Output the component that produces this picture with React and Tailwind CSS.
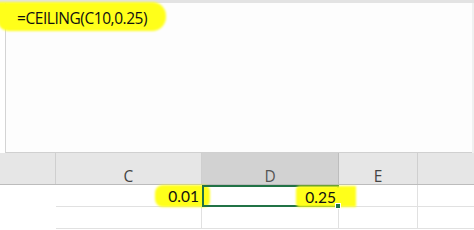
import React from "react";

const font = { fontFamily: '"Open Sans", Lato, "Liberation Sans", sans-serif' };

export default function App() {
  return (
    <div className="relative w-[474px] h-[230px] overflow-hidden bg-white" style={font}>
      {/* formula bar region */}
      <div className="h-[153px] border-t-[3px] border-[#e3e3e3] flex">
        <div className="w-[5px] bg-white" />
        <div className="flex-1 border-l border-[#d4d4d4] border-b border-b-[#d0d0d0] bg-[#fdfdfd] relative">
          <div className="absolute left-[-8px] top-[-1px] w-[168px] h-[29px] bg-[#ffff1a] rounded-r-[14px] rounded-bl-[10px] blur-[1px]" />
          <div className="relative pl-[11px] pt-[5px] text-[15.5px] leading-[20px] text-[#111] tracking-[-0.45px]">
            =CEILING(C10,0.25)
          </div>
        </div>
        <div className="w-[2px] bg-[#f0f0f0]" />
      </div>

      {/* column headers */}
      <div className="flex h-[32px] bg-[#e6e6e6] border-b border-[#bcbcbc] text-[15.5px] leading-[16px] text-[#444]">
        <div className="w-[56px] border-r border-[#cfcfcf]" />
        <div className="w-[146px] border-r border-[#cfcfcf] flex justify-center pt-[15px]">C</div>
        <div className="w-[137px] bg-[#d2d2d2] border-r border-[#bdbdbd] flex justify-center pt-[15px] text-[#555]">D</div>
        <div className="w-[79px] border-r border-[#cfcfcf] flex justify-center pt-[15px]">E</div>
        <div className="flex-1" />
      </div>

      {/* row 1 */}
      <div className="flex h-[22px] text-[15.5px] text-[#111]" style={{ fontFamily: 'Lato, "Open Sans", sans-serif' }}>
        <div className="w-[56px] bg-white" />
        <div className="w-[146px] border-b border-[#e1e1e1] relative flex items-center justify-end pr-[3px]">
          <div className="absolute left-[99px] top-[0px] w-[55px] h-[22px] bg-[#ffff1a] rounded-l-[8px] rounded-r-[6px] blur-[0.8px]" />
          <span className="relative pt-[3px]">0.01</span>
        </div>
        <div className="w-[137px] border-[2px] border-[#217346] relative flex items-center justify-end pr-[1px]">
          <div className="absolute left-[92px] top-[-1px] w-[60px] h-[21px] bg-[#ffff1a] rounded-l-[4px] blur-[0.8px]" />
          <span className="relative pt-[3px]">0.25</span>
          <div className="absolute right-[-4px] bottom-[-4px] w-[6px] h-[6px] bg-[#217346] border border-white" />
        </div>
        <div className="w-[79px] border-b border-r border-[#e1e1e1]" />
        <div className="flex-1 border-b border-[#e1e1e1]" />
      </div>

      {/* row 2 */}
      <div className="flex h-[22px]">
        <div className="w-[56px] bg-white" />
        <div className="w-[146px] border-b border-r border-[#e1e1e1]" />
        <div className="w-[137px] border-b border-r border-[#e1e1e1]" />
        <div className="w-[79px] border-b border-r border-[#e1e1e1]" />
        <div className="flex-1 border-b border-[#e1e1e1]" />
      </div>
    </div>
  );
}
